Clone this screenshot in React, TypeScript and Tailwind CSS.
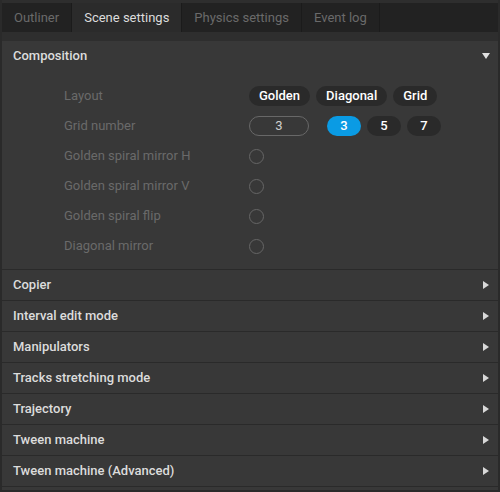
import React from 'react';

const tabs = ['Outliner', 'Scene settings', 'Physics settings', 'Event log'];

const sections = [
  'Copier',
  'Interval edit mode',
  'Manipulators',
  'Tracks stretching mode',
  'Trajectory',
  'Tween machine',
  'Tween machine (Advanced)',
];

function TriangleRight() {
  return (
    <svg width="8" height="10" viewBox="0 0 8 10" className="shrink-0">
      <path d="M1 1 L7 5 L1 9 Z" fill="#d8d8d8" />
    </svg>
  );
}

function TriangleDown() {
  return (
    <svg width="10" height="8" viewBox="0 0 10 8" className="shrink-0">
      <path d="M1 1 L9 1 L5 7 Z" fill="#e0e0e0" />
    </svg>
  );
}

function Row({ label, children }: { label: string; children?: React.ReactNode }) {
  return (
    <div className="flex h-[30px] items-center">
      <div className="w-[247px] shrink-0 pl-[62px] text-[13px] whitespace-nowrap text-[#6a6a6a]">{label}</div>
      <div className="flex items-center">{children}</div>
    </div>
  );
}

function Radio() {
  return <div className="h-[15px] w-[15px] rounded-full border-[1.5px] border-[#666]" />;
}

export default function App() {
  return (
    <div
      className="flex h-[492px] w-[500px] flex-col overflow-hidden border-x-2 border-b-2 border-x-[#2a2a2a] border-b-[#2a2a2a] bg-[#383838]"
      style={{ fontFamily: 'Roboto, "Noto Sans", sans-serif' }}
    >
      {/* Top strip + tabs */}
      <div className="h-[3px] shrink-0 bg-[#2e2e2e]" />
      <div className="flex h-[29px] shrink-0 bg-[#222222]">
        {tabs.map((t, i) => (
          <div
            key={t}
            className={`flex items-center border-r border-[#1b1b1b] px-[12px] pt-[1px] text-[13px] ${
              i === 1 ? 'bg-[#2b2b2b] text-[#dcdcdc]' : 'text-[#6a6a6a]'
            }`}
          >
            {t}
          </div>
        ))}
      </div>
      <div className="h-[9px] shrink-0 bg-[#2e2e2e]" />

      {/* Composition */}
      <div className="flex h-[29px] shrink-0 items-center justify-between pl-[11px] pr-[7px]">
        <span className="text-[13px] font-medium text-[#dcdcdc]">Composition</span>
        <TriangleDown />
      </div>
      <div className="flex shrink-0 flex-col pt-[11px] pb-[8px]">
        <Row label="Layout">
          <div className="flex gap-[6px]">
            {['Golden', 'Diagonal', 'Grid'].map((b) => (
              <div
                key={b}
                className="flex h-[20px] items-center rounded-full bg-[#2a2a2a] px-[10px] text-[13px] font-medium text-white"
              >
                {b}
              </div>
            ))}
          </div>
        </Row>
        <Row label="Grid number">
          <div className="flex h-[20px] w-[60px] items-center justify-center rounded-full border border-[#686868] text-[13px] text-[#cfcfcf]">
            3
          </div>
          <div className="ml-[18px] flex gap-[6px]">
            {['3', '5', '7'].map((n, i) => (
              <div
                key={n}
                className={`flex h-[20px] w-[34px] items-center justify-center rounded-full text-[13px] font-medium text-white ${
                  i === 0 ? 'bg-[#0a9be4]' : 'bg-[#2a2a2a]'
                }`}
              >
                {n}
              </div>
            ))}
          </div>
        </Row>
        <Row label="Golden spiral mirror H">
          <Radio />
        </Row>
        <Row label="Golden spiral mirror V">
          <Radio />
        </Row>
        <Row label="Golden spiral flip">
          <Radio />
        </Row>
        <Row label="Diagonal mirror">
          <Radio />
        </Row>
      </div>

      {/* Collapsed sections */}
      {sections.map((s) => (
        <div
          key={s}
          className="flex h-[31px] shrink-0 items-center justify-between border-t border-[#2a2a2a] pl-[11px] pr-[8px]"
        >
          <span className="text-[13px] font-medium text-[#dcdcdc]">{s}</span>
          <TriangleRight />
        </div>
      ))}
      <div className="flex-1 border-t border-[#2a2a2a]" />
    </div>
  );
}
